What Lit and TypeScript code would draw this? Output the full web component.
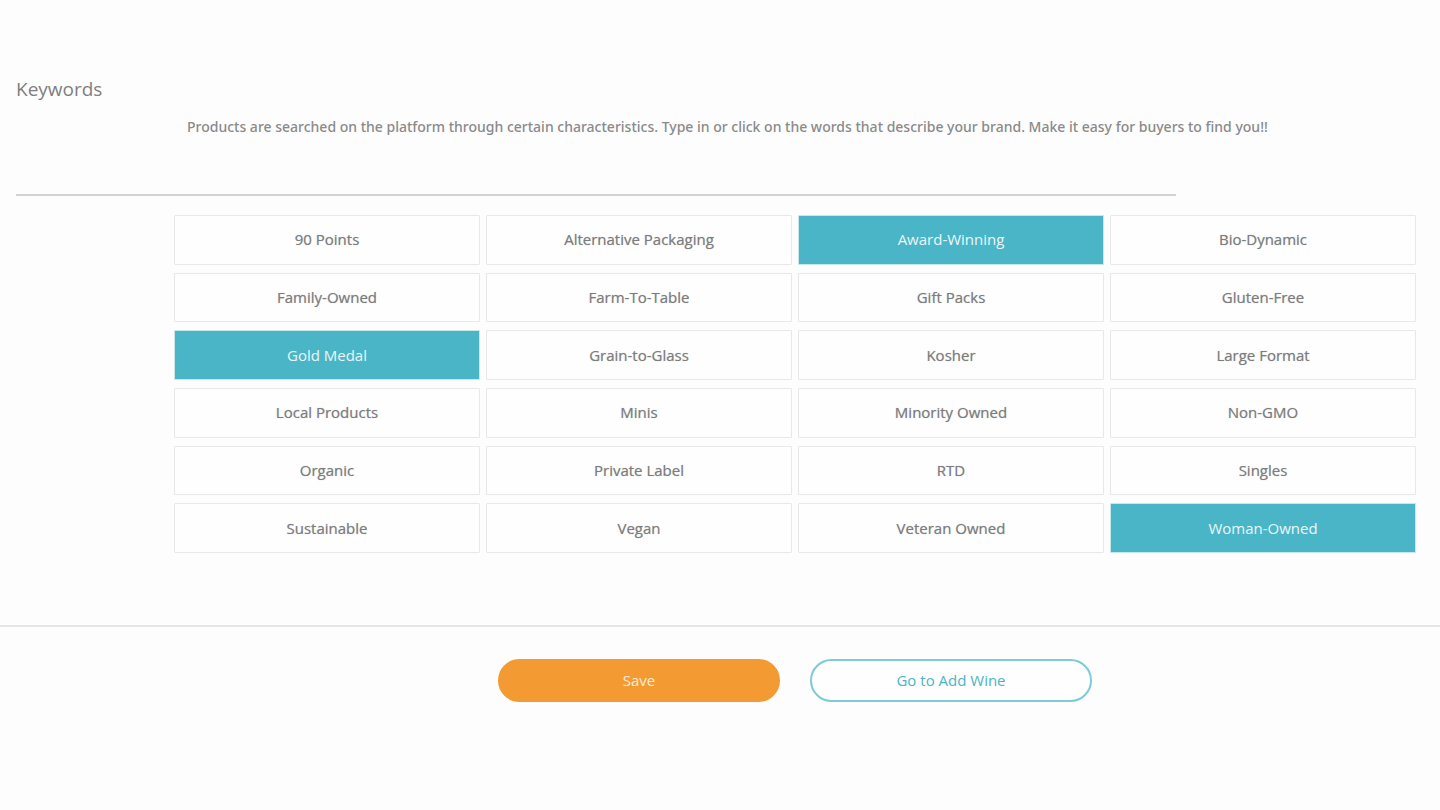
import { LitElement, html, css } from "lit";
import { customElement, state } from "lit/decorators.js";
import { classMap } from "lit/directives/class-map.js";

const KEYWORDS = [
  "90 Points", "Alternative Packaging", "Award-Winning", "Bio-Dynamic",
  "Family-Owned", "Farm-To-Table", "Gift Packs", "Gluten-Free",
  "Gold Medal", "Grain-to-Glass", "Kosher", "Large Format",
  "Local Products", "Minis", "Minority Owned", "Non-GMO",
  "Organic", "Private Label", "RTD", "Singles",
  "Sustainable", "Vegan", "Veteran Owned", "Woman-Owned",
];

@customElement("app-root")
export class AppRoot extends LitElement {
  @state() private selected = new Set(["Award-Winning", "Gold Medal", "Woman-Owned"]);

  static styles = css`
    :host {
      display: block;
      min-height: 100vh;
      box-sizing: border-box;
      padding-top: 76px;
      background: #fdfdfd;
      color: #7f7f7f;
      font: 15px/24px "Open Sans", sans-serif;
    }
    .title {
      display: block;
      margin: 0 16px;
      font-size: 19px;
      line-height: 26px;
    }
    .intro {
      margin: 13px 24px 0 187px;
      color: #8a8a8a;
      font-family: "Noto Sans", "Open Sans", sans-serif;
      font-size: 14px;
      font-weight: 500;
    }
    .entry {
      display: block;
      box-sizing: border-box;
      width: calc(100% - 280px);
      height: 57px;
      margin: 0 16px;
      padding: 0;
      border: 0;
      border-bottom: 2px solid #d2d2d2;
      background: none;
      color: inherit;
      font: inherit;
      outline: none;
    }
    .grid {
      display: grid;
      grid-template-columns: repeat(4, 1fr);
      grid-auto-rows: 1fr;
      gap: 8px 6px;
      min-height: 338px;
      margin: 19px 24px 0 174px;
    }
    button {
      box-sizing: border-box;
      padding: 0 0 1px;
      font: inherit;
      cursor: pointer;
    }
    .keyword {
      border: 1px solid #e8e8e8;
      border-radius: 1px;
      background: #fefefe;
      color: #7d7d7d;
      text-shadow: 0 0 1px #b4b4b4;
    }
    .keyword.on {
      border-color: #c9e6ea;
      background: #4ab5c6;
      color: #eaf7f9;
      text-shadow: none;
    }
    .actions {
      display: flex;
      justify-content: center;
      gap: 30px;
      margin-top: 72px;
      padding: 32px 0 0 150px;
      border-top: 2px solid #e6e6e6;
    }
    .action {
      width: 282px;
      height: 43px;
      border: 2px solid #7ccbd6;
      border-radius: 22px;
      background: #fefefe;
      color: #4ab5c6;
    }
    .action.primary {
      border-color: #f39a33;
      background: #f39a33;
      color: #fdebd6;
    }
  `;

  private toggle(word: string) {
    const next = new Set(this.selected);
    if (!next.delete(word)) next.add(word);
    this.selected = next;
  }

  render() {
    return html`
      <label class="title" for="keywords">Keywords</label>
      <div class="intro">
        Products are searched on the platform through certain characteristics. Type in or click on
        the words that describe your brand. Make it easy for buyers to find you!!
      </div>
      <input class="entry" id="keywords" type="text" />
      <div class="grid">
        ${KEYWORDS.map((word) => html`
          <button
            type="button"
            class=${classMap({ keyword: true, on: this.selected.has(word) })}
            aria-pressed=${this.selected.has(word)}
            @click=${() => this.toggle(word)}
          >${word}</button>`)}
      </div>
      <div class="actions">
        <button type="button" class="action primary">Save</button>
        <button type="button" class="action">Go to Add Wine</button>
      </div>
    `;
  }
}
